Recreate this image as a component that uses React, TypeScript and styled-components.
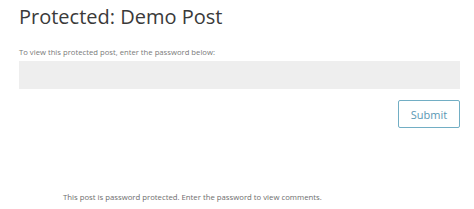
import * as React from "react";
import styled, { createGlobalStyle } from "styled-components";

const GlobalStyle = createGlobalStyle`
  html, body {
    margin: 0;
    padding: 0;
    background: #ffffff;
  }
  body {
    font-family: "Open Sans", "Liberation Sans", sans-serif;
  }
`;

const Page = styled.div`
  width: 474px;
  height: 209px;
  box-sizing: border-box;
  padding: 5px 14px 0 19px;
  display: flex;
  flex-direction: column;
`;

const Title = styled.h1`
  margin: 0;
  font-size: 20px;
  font-weight: 400;
  line-height: 24px;
  color: #3a3a3a;
`;

const Form = styled.form`
  margin-top: 18px;
  display: flex;
  flex-direction: column;
`;

const Label = styled.label`
  font-size: 7.7px;
  line-height: 10px;
  color: #7a7a7a;
`;

const Field = styled.input`
  margin-top: 4px;
  height: 28px;
  width: 100%;
  box-sizing: border-box;
  border: none;
  background: #eeeeee;
  outline: none;
`;

const Actions = styled.div`
  display: flex;
  justify-content: flex-end;
  margin-top: 11px;
`;

const SubmitButton = styled.button`
  width: 62px;
  height: 28px;
  box-sizing: border-box;
  border: 1px solid #72aec4;
  border-radius: 2px;
  background: #ffffff;
  color: #5a98b4;
  font-family: "Open Sans", "Liberation Sans", sans-serif;
  font-size: 11px;
  cursor: pointer;
`;

const Notice = styled.p`
  margin: 64px 0 0 44px;
  font-size: 7.75px;
  line-height: 10px;
  color: #6e6e6e;
`;

export default function App() {
  return (
    <>
      <GlobalStyle />
      <Page>
        <Title>Protected: Demo Post</Title>
        <Form onSubmit={(e) => e.preventDefault()}>
          <Label htmlFor="pwbox">
            To view this protected post, enter the password below:
          </Label>
          <Field id="pwbox" type="password" />
          <Actions>
            <SubmitButton type="submit">Submit</SubmitButton>
          </Actions>
        </Form>
        <Notice>
          This post is password protected. Enter the password to view
          comments.
        </Notice>
      </Page>
    </>
  );
}
